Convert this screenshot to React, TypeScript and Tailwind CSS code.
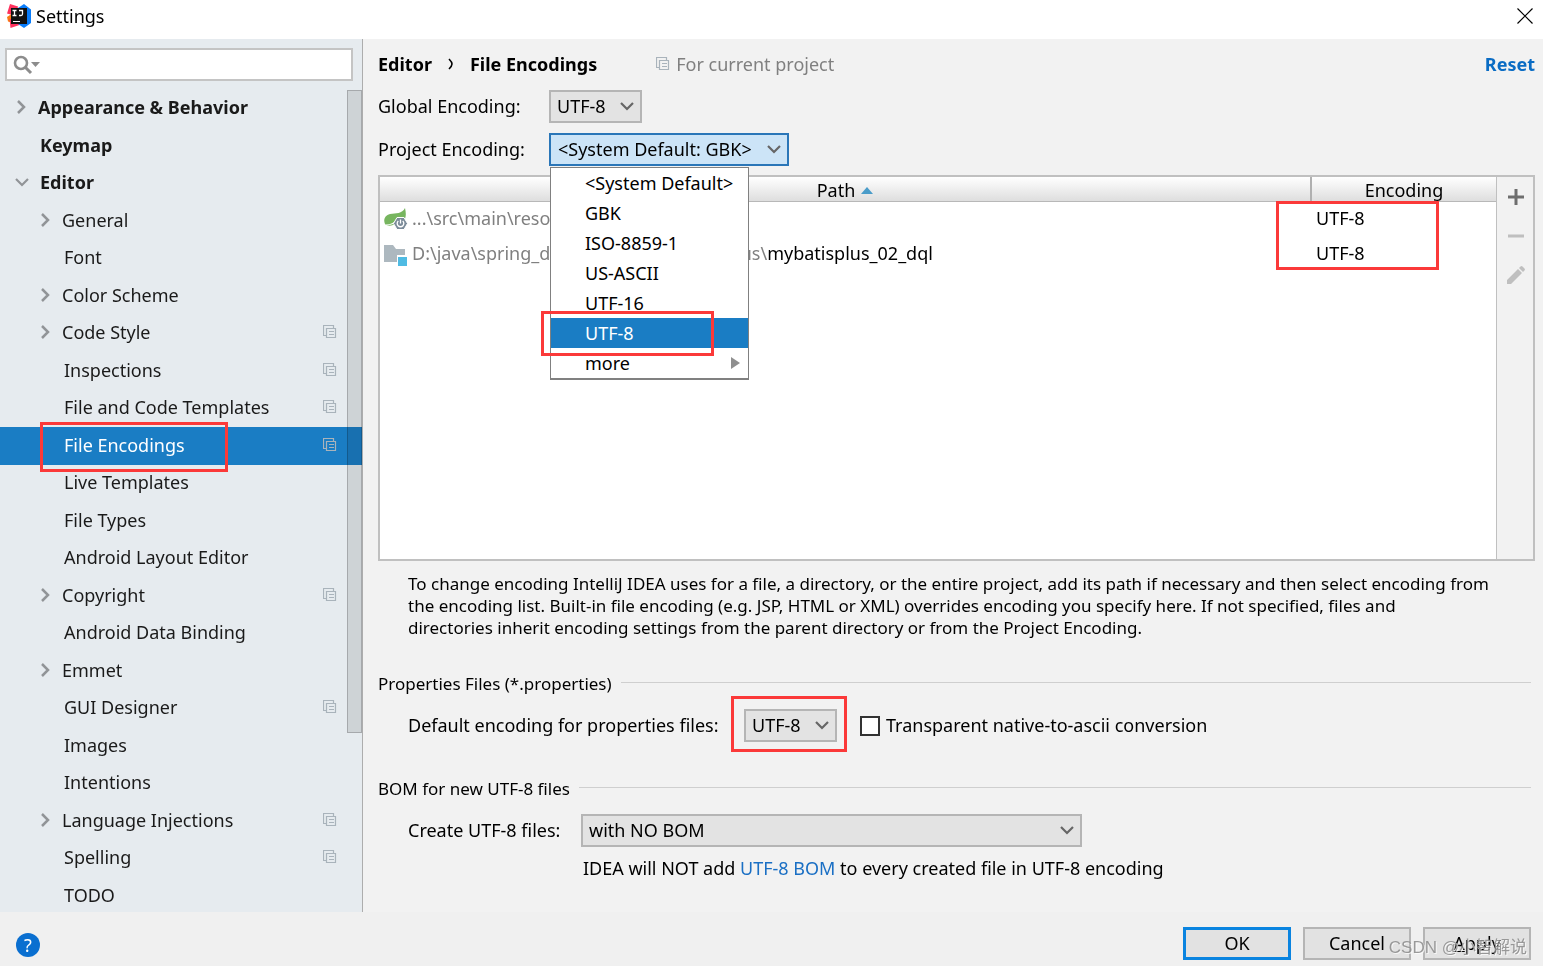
import { useState, type ReactNode } from 'react'
import clsx from 'clsx'

interface TreeItem {
  label: string
  level: 0 | 1
  expand?: 'open' | 'closed'
  project?: boolean
}

const TREE: TreeItem[] = [
  { label: 'Appearance & Behavior', level: 0, expand: 'closed' },
  { label: 'Keymap', level: 0 },
  { label: 'Editor', level: 0, expand: 'open' },
  { label: 'General', level: 1, expand: 'closed' },
  { label: 'Font', level: 1 },
  { label: 'Color Scheme', level: 1, expand: 'closed' },
  { label: 'Code Style', level: 1, expand: 'closed', project: true },
  { label: 'Inspections', level: 1, project: true },
  { label: 'File and Code Templates', level: 1, project: true },
  { label: 'File Encodings', level: 1, project: true },
  { label: 'Live Templates', level: 1 },
  { label: 'File Types', level: 1 },
  { label: 'Android Layout Editor', level: 1 },
  { label: 'Copyright', level: 1, expand: 'closed', project: true },
  { label: 'Android Data Binding', level: 1 },
  { label: 'Emmet', level: 1, expand: 'closed' },
  { label: 'GUI Designer', level: 1, project: true },
  { label: 'Images', level: 1 },
  { label: 'Intentions', level: 1 },
  { label: 'Language Injections', level: 1, expand: 'closed', project: true },
  { label: 'Spelling', level: 1, project: true },
  { label: 'TODO', level: 1 },
]

const ENCODINGS = ['<System Default>', 'GBK', 'ISO-8859-1', 'US-ASCII', 'UTF-16', 'UTF-8', 'more']

const IdeaLogo = () => (
  <svg viewBox="0 0 24 24" className="h-6 w-6 shrink-0" aria-hidden="true">
    <path d="M3 0l8 2.500L9 12 0 9.500z" fill="#fe315d" />
    <path d="M0 13l6-4v10l-5-1.500z" fill="#f97a12" />
    <path d="M2.500 15h12l-2 6-9 3z" fill="#fe315d" />
    <path d="M11 4l6-4 7 5.500V19l-7 5-6-4z" fill="#087cfa" />
    <rect x="4" y="4" width="16" height="16" fill="#111" />
    <path d="M5.500 6.500h4M7.500 6.500v5M5.500 11.500h4M12 6.500h3.500V10q0 1.500-1.500 1.500h-2" fill="none" stroke="#fff" strokeWidth="1.300" />
    <path d="M6 17.500h7" stroke="#fff" />
  </svg>
)

const Chevron = ({ className, open = false }: { className?: string; open?: boolean }) => (
  <svg viewBox="0 0 14 14" className={clsx('h-[14px] w-[14px] shrink-0', className)} fill="none" stroke="currentColor" aria-hidden="true">
    {open ? <path d="M1 4l6 6 6-6" strokeWidth="2.200" /> : <path d="M3 1l6 6-6 6" strokeWidth="2.500" />}
  </svg>
)

const ProjectIcon = ({ className }: { className?: string }) => (
  <svg viewBox="0 0 14 14" className={clsx('h-[14px] w-[14px] shrink-0', className)} fill="none" stroke="#a9b3bb" strokeWidth="1.200" aria-hidden="true">
    <path d="M3 10.500H.500V.500h10V3" />
    <path d="M3.500 3.500h9v9h-9zM6 6.500h5M6 9.500h5" />
  </svg>
)

const SpringIcon = () => (
  <svg viewBox="0 0 24 24" className="h-6 w-6 shrink-0" aria-hidden="true">
    <path d="M21 1c1.500 6 1 11-2 14L9 18c-3 1-6 1-8-1-2-4 0-9 5-10 6-1 12 0 15-6z" fill="#77b55f" />
    <path d="M2 18c6 0 9-2 12-6" fill="none" stroke="#fff" strokeWidth="1.200" />
    <path d="M13 10.500h7l3.500 6-3.500 6h-7l-3.500-6z" fill="#7b8b99" stroke="#fff" />
    <path d="M14.300 14a3.300 3.300 0 1 0 4.400 0M16.500 12.500v4" fill="none" stroke="#fff" strokeWidth="1.300" />
  </svg>
)

const ModuleIcon = () => (
  <svg viewBox="0 0 24 24" className="h-6 w-6 shrink-0" aria-hidden="true">
    <path d="M0 3h9l3 4h9v6h-8v7H0z" fill="#adb8bf" />
    <path d="M14 15h9v9h-9z" fill="#4fbbe3" />
  </svg>
)

// Red frame drawn over the control it surrounds.
const Mark = ({ className }: { className: string }) => (
  <span className={clsx('pointer-events-none absolute z-20 border-3 border-[#fb3939]', className)} aria-hidden="true" />
)

interface ComboProps {
  id: string
  options: string[]
  active?: boolean
  className?: string
}

const Combo = ({ id, options, active = false, className }: ComboProps) => (
  <div className={clsx('relative', className)}>
    <select
      id={id}
      className={clsx(
        'block h-[33px] w-full appearance-none border-2 pr-8 pb-[2px] focus:outline-none',
        active ? 'border-[#2a76b8] bg-[#cce4f7] pl-[7px]' : 'border-[#b5b5b5] bg-[#e3e3e3] pl-[6px]',
      )}
    >
      {options.map((o) => (
        <option key={o}>{o}</option>
      ))}
    </select>
    <Chevron open className="pointer-events-none absolute top-[9px] right-2 text-[#666]" />
  </div>
)

const Section = ({ title, children }: { title: string; children: ReactNode }) => (
  <section>
    <div className="flex h-6 items-center gap-[9px]">
      <h2 className="text-[17px]">{title}</h2>
      <span className="mr-1 mb-1 h-px flex-1 bg-[#cfcfcf]" />
    </div>
    {children}
  </section>
)

const Sidebar = () => {
  const [selected, setSelected] = useState('File Encodings')

  return (
    <aside className="relative flex w-[363px] shrink-0 flex-col overflow-hidden border-r border-[#adadad] bg-[#e6ebef]">
      <label className="mt-[9px] mr-[9px] ml-[5px] flex h-[33px] shrink-0 items-center border-2 border-[#c4c4c4] bg-white pl-[6px]">
        <svg viewBox="0 0 28 20" className="h-5 w-7 shrink-0" fill="none" aria-hidden="true">
          <circle cx="8" cy="8" r="6" stroke="#8c8c8c" strokeWidth="2.600" />
          <path d="M12 12l6 6" stroke="#8c8c8c" strokeWidth="3" />
          <path d="M18 7h9l-4.500 5z" fill="#8c8c8c" />
        </svg>
        <input type="text" aria-label="Search settings" className="min-w-0 flex-1 focus:outline-none" />
      </label>
      <ul className="mt-[9px]">
        {TREE.map((item) => (
          <li key={item.label} className="odd:h-[37px] even:h-[38px]">
            <button
              onClick={() => setSelected(item.label)}
              className={clsx(
                'relative flex h-full w-full items-center pr-[25px] pb-[3px] text-left',
                item.level === 0 ? 'pl-[15px] font-bold' : 'pl-[39px]',
                selected === item.label ? 'bg-[#1a7dc4] text-white' : 'text-[#1a1a1a]',
              )}
            >
              <span className={clsx('shrink-0', item.expand === 'closed' ? 'w-[23px]' : 'w-[25px]')}>
                {item.expand && <Chevron open={item.expand === 'open'} className="text-[#919497]" />}
              </span>
              <span className="flex-1 truncate">{item.label}</span>
              {item.project && <ProjectIcon />}
              {item.label === 'File Encodings' && <Mark className="-top-[5px] -bottom-[7px] left-10 w-[188px]" />}
            </button>
          </li>
        ))}
      </ul>
      {/* translucent thumb, the selected row shows through */}
      <div className="pointer-events-none absolute top-[51px] right-0 h-[643px] w-[15px] border border-black/20 bg-black/10 mix-blend-multiply" />
    </aside>
  )
}

const EncodingMenu = () => (
  <ul className="absolute top-full left-px z-10 mt-px w-[199px] border border-b-2 border-[#808080] bg-white">
    {ENCODINGS.map((name) => (
      <li key={name}>
        <button
          className={clsx(
            'relative flex h-[30px] w-full items-center justify-between pr-2 pl-[34px] whitespace-nowrap',
            name === 'UTF-8' && 'bg-[#1a7dc4] text-white',
          )}
        >
          {name}
          {name === 'more' && (
            <svg viewBox="0 0 9 12" className="h-3 w-[9px]" aria-hidden="true">
              <path d="M0 0l9 6-9 6z" fill="#8f8f8f" />
            </svg>
          )}
          {name === 'UTF-8' && <Mark className="-top-[7px] -bottom-2 -left-[10px] w-[173px]" />}
        </button>
      </li>
    ))}
  </ul>
)

const FileTable = () => (
  <div className="mt-[9px] flex min-h-[200px] flex-1 border-2 border-[#c0c0c0] bg-white">
    <div className="relative min-w-0 flex-1">
      <table className="w-full table-fixed border-collapse">
        <thead>
          <tr className="h-6 border-b border-[#b8b8b8] bg-linear-to-b from-white to-[#dedede] leading-[22px]">
            <th className="p-0 pt-[2px] font-normal">
              <span className="inline-flex items-center gap-[6px]">
                Path
                <svg viewBox="0 0 12 7" className="h-[7px] w-3" aria-hidden="true">
                  <path d="M0 7l6-7 6 7z" fill="#4a9cc9" />
                </svg>
              </span>
            </th>
            <th className="w-[185px] border-l-2 border-[#b0b0b0] p-0 pt-[2px] font-normal">Encoding</th>
          </tr>
        </thead>
        <tbody>
          <tr className="h-[35px]">
            <td className="p-0 pl-1">
              <div className="flex items-center gap-1 text-[#808080]">
                <SpringIcon />
                <span className="pb-[2px]">...\src\main\resources</span>
              </div>
            </td>
            <td className="p-0 pb-[2px] pl-[5px]">UTF-8</td>
          </tr>
          <tr className="h-[35px]">
            <td className="p-0 pl-1">
              <div className="flex items-center gap-1 text-[#808080]">
                <ModuleIcon />
                <span className="pb-[2px] whitespace-nowrap">
                  D:\java\spring_data\projects\mybatisplus\<span className="text-black">mybatisplus_02_dql</span>
                </span>
              </div>
            </td>
            <td className="p-0 pb-[2px] pl-[5px]">UTF-8</td>
          </tr>
        </tbody>
      </table>
      <Mark className="top-6 right-[57px] h-[69px] w-[163px]" />
    </div>
    <div className="flex w-[37px] shrink-0 flex-col items-center gap-[19px] border-l border-[#c0c0c0] bg-[#f2f2f2] pt-[10px] pl-px">
      <button aria-label="Add">
        <svg viewBox="0 0 20 20" className="h-5 w-5" stroke="#6e6e6e" strokeWidth="3" aria-hidden="true">
          <path d="M2 10h16M10 2v16" />
        </svg>
      </button>
      <button aria-label="Remove" disabled>
        <svg viewBox="0 0 20 20" className="h-5 w-5" stroke="#bfbfbf" strokeWidth="3" aria-hidden="true">
          <path d="M2 10h16" />
        </svg>
      </button>
      <button aria-label="Edit" disabled>
        <svg viewBox="0 0 20 20" className="h-5 w-5" fill="#bfbfbf" aria-hidden="true">
          <path d="M1 19v-4L12 4l4 4L5 19zM13 3l1.500-1.500q1-1 2 0l2 2q1 1 0 2L17 7z" />
        </svg>
      </button>
    </div>
  </div>
)

const DialogButton = ({ primary = false, children }: { primary?: boolean; children: ReactNode }) => (
  <button
    className={clsx(
      'h-[33px] w-[108px] bg-[#e2e2e2]',
      primary ? 'border-3 border-[#0a84e0]' : 'border-2 border-[#b5b5b5]',
    )}
  >
    {children}
  </button>
)

export default function App() {
  return (
    <div className="relative flex h-screen flex-col overflow-hidden bg-[#f2f2f2] font-['Noto_Sans','Noto_Sans_CJK_SC',sans-serif] text-[18px] leading-6 text-black">
      <header className="flex h-[39px] shrink-0 items-center justify-between bg-white pr-[10px] pb-[7px] pl-[7px]">
        <div className="flex items-center gap-[5px]">
          <IdeaLogo />
          <h1>Settings</h1>
        </div>
        <button aria-label="Close">
          <svg viewBox="0 0 16 16" className="h-4 w-4" stroke="#000" strokeWidth="1.200" aria-hidden="true">
            <path d="M.500.500l15 15M15.500.500l-15 15" />
          </svg>
        </button>
      </header>

      <div className="flex min-h-0 flex-1">
        <Sidebar />
        <main className="flex min-w-0 flex-1 flex-col pt-[13px] pr-2 pb-8 pl-[15px]">
          <div className="flex items-center">
            <span className="font-bold">Editor</span>
            <svg viewBox="0 0 6 12" className="mx-4 h-3 w-[6px]" fill="none" stroke="#000" strokeWidth="1.600" aria-hidden="true">
              <path d="M1 1q3 3 3 5t-3 5" />
            </svg>
            <span className="font-bold">File Encodings</span>
            <ProjectIcon className="mr-[6px] ml-[59px]" />
            <span className="text-[#808080]">For current project</span>
            <a href="#reset" className="ml-auto font-bold text-[#0a6cc4]">
              Reset
            </a>
          </div>

          <div className="mt-[14px] flex items-center">
            <label htmlFor="global-encoding" className="w-[171px] pb-[2px]">
              Global Encoding:
            </label>
            <Combo id="global-encoding" options={['UTF-8']} className="w-[93px]" />
          </div>
          <div className="mt-[10px] flex items-center">
            <label htmlFor="project-encoding" className="w-[171px] pb-[2px]">
              Project Encoding:
            </label>
            <div className="relative">
              <Combo id="project-encoding" options={['<System Default: GBK>']} active className="w-[240px]" />
              <EncodingMenu />
            </div>
          </div>

          <FileTable />

          <p className="mt-3 mb-[33px] pl-[30px] text-[17px] leading-[22px]">
            To change encoding IntelliJ IDEA uses for a file, a directory, or the entire project, add its path if
            necessary and then select encoding from
            <br />
            the encoding list. Built-in file encoding (e.g. JSP, HTML or XML) overrides encoding you specify here. If
            not specified, files and
            <br />
            directories inherit encoding settings from the parent directory or from the Project Encoding.
          </p>

          <Section title="Properties Files (*.properties)">
            <div className="mt-[13px] mb-[35px] flex items-center pl-[30px]">
              <label htmlFor="properties-encoding" className="w-[316px] pb-[2px]">
                Default encoding for properties files:
              </label>
              <div className="relative ml-5">
                <Combo id="properties-encoding" options={['UTF-8']} className="w-[93px]" />
                <Mark className="-top-[13px] -right-[10px] -bottom-[10px] -left-[13px]" />
              </div>
              <label className="ml-[23px] flex items-center gap-[6px]">
                <input type="checkbox" className="h-5 w-5 appearance-none border-2 border-[#333] bg-white" />
                <span className="pb-[2px]">Transparent native-to-ascii conversion</span>
              </label>
            </div>
          </Section>

          <Section title="BOM for new UTF-8 files">
            <div className="mt-[13px] flex items-center pl-[30px]">
              <label htmlFor="bom" className="w-[173px] pb-[2px]">
                Create UTF-8 files:
              </label>
              <Combo id="bom" options={['with NO BOM']} className="w-[501px]" />
            </div>
            <p className="mt-[9px] pl-[205px]">
              IDEA will NOT add{' '}
              <a href="#bom" className="text-[#1a6fc4]">
                UTF-8 BOM
              </a>{' '}
              to every created file in UTF-8 encoding
            </p>
          </Section>
        </main>
      </div>

      <footer className="flex h-[54px] shrink-0 items-center bg-[#f0f0f0] pt-3 pr-3 pb-1 pl-4">
        <button aria-label="Help" className="mt-[3px] mr-auto h-6 w-6 rounded-full bg-[#0a6fd0] text-white">
          ?
        </button>
        <div className="flex gap-3">
          <DialogButton primary>OK</DialogButton>
          <DialogButton>Cancel</DialogButton>
          <DialogButton>
            <span className="underline">A</span>pply
          </DialogButton>
        </div>
      </footer>
      <span className="pointer-events-none absolute right-4 bottom-[6px] font-['Liberation_Sans','Noto_Sans_CJK_SC',sans-serif] text-[17px] text-[#8f8f8f]/90 [text-shadow:1px_1px_0_rgba(255,255,255,.7)]">
        CSDN @小智解说
      </span>
    </div>
  )
}
